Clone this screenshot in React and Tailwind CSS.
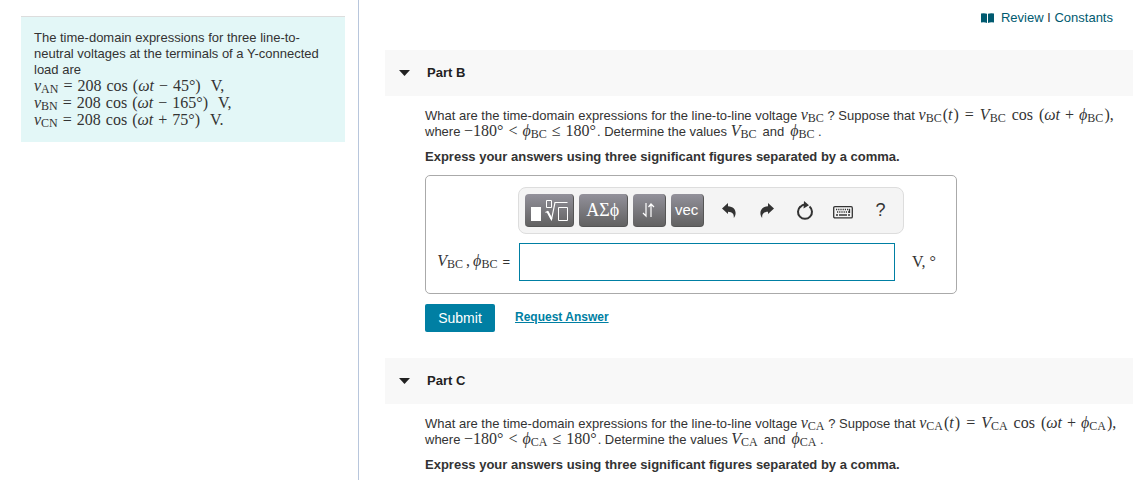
import React from "react";

const Sub = ({ children }) => (
  <span className="align-[-2px] text-[12px] leading-[0px] not-italic">{children}</span>
);

const Var = ({ name, sub }) => (
  <span>
    <i className="italic">{name}</i>
    {sub && <Sub>{sub}</Sub>}
  </span>
);

const M = ({ children }) => (
  <span className="font-['Liberation_Serif',serif] text-[16px] leading-[0px] whitespace-nowrap">
    {children}
  </span>
);

const Op = ({ children }) => <span className="mx-[5px]">{children}</span>;

function Voltage({ sub, sign, angle, end }) {
  return (
    <p className="h-[17px] leading-[17px]">
      <M>
        <Var name="v" sub={sub} />
        <Op>=</Op>208<span className="mx-[5px]">cos</span>(
        <Var name="ωt" />
        <Op>{sign}</Op>
        {angle}°)
        <span className="ml-2.5">V{end}</span>
      </M>
    </p>
  );
}

function PartHeader({ title }) {
  return (
    <h2 className="mr-1.5 bg-[#f8f8f8] text-[13px] font-bold text-[#222]">
      <button type="button" className="flex h-[46px] w-full items-center pl-3.5 text-left">
        <svg width="11" height="6" viewBox="0 0 11 6" className="mr-[17px]" aria-hidden="true">
          <path d="M0 0h11L5.5 6z" fill="#222" />
        </svg>
        {title}
      </button>
    </h2>
  );
}

function Question({ sub }) {
  return (
    <div className="pt-3 pr-1.5 pl-10 leading-4">
      <p>
        What are the time-domain expressions for the line-to-line voltage{" "}
        <M><Var name="v" sub={sub} /></M> ? Suppose that{" "}
        <M>
          <Var name="v" sub={sub} />
          <span className="ml-px">(</span>
          <Var name="t" />
          <span className="ml-px">)</span>
          <span className="mx-1.5">=</span>
          <Var name="V" sub={sub} />
          <span className="mx-1.5">cos</span>(
          <Var name="ωt" />
          <Op>+</Op>
          <Var name="ϕ" sub={sub} />
          <span className="ml-px">),</span>
        </M>{" "}
        where{" "}
        <M>
          −180°<Op>&lt;</Op>
          <Var name="ϕ" sub={sub} />
          <Op>≤</Op>180°
        </M>
        <span className="ml-px">. Determine the values </span>
        <M><Var name="V" sub={sub} /></M>
        <span className="mx-1.5">and</span>
        <M><Var name="ϕ" sub={sub} /></M> .
      </p>
      <p className="mt-[9px] font-bold">
        Express your answers using three significant figures separated by a comma.
      </p>
    </div>
  );
}

const darkButton =
  "flex h-[33px] items-center justify-center rounded border-r border-b border-[#555] bg-linear-to-b from-[#93919b] to-[#626262] text-white";
const iconButton = "flex h-[33px] w-[33px] items-center justify-center text-[#333]";

function Toolbar() {
  return (
    <div
      role="toolbar"
      className="flex h-[47px] w-[386px] items-center gap-[5px] rounded-lg border border-[#ddd] bg-[#f4f4f4] px-1.5"
    >
      <button type="button" aria-label="Templates" className={darkButton + " w-[49px] pb-1"}>
        <svg width="39" height="25" viewBox="0 0 39 25" fill="none" stroke="#fff">
          <path d="M2 11h10v14H2z" fill="#fff" stroke="none" />
          <path d="M17.500 4.500h5v7h-5z" />
          <path d="M16.500 16.500l2-1 4 8L26 6.500h12.500" strokeWidth="1.200" />
          <path d="M18.500 15.500l4 7.500" strokeWidth="2" />
          <path d="M29.500 11.500h9v13h-9z" />
        </svg>
      </button>
      <button
        type="button"
        aria-label="Symbols"
        className={darkButton + " w-[49px] font-['Liberation_Serif',serif] text-[18px]"}
      >
        ΑΣϕ
      </button>
      <button type="button" aria-label="Arrows" className={darkButton + " w-[33px]"}>
        <svg width="13" height="16" viewBox="0 0 13 16" fill="none" stroke="#fff">
          <path d="M4 1v13M1 11l3 3V11M9 15V2M6.500 5L9 2l3 3" strokeWidth="1.200" />
        </svg>
      </button>
      <button type="button" className={darkButton + " w-[33px] text-[15px]"}>
        vec
      </button>
      <button type="button" aria-label="Undo" className={iconButton + " ml-1"}>
        <svg width="14" height="15" viewBox="0 0 14 15" fill="currentColor">
          <path d="M0 5.500L6 0v3.200c5 .3 7.600 3 7.600 6.800 0 2-.7 3.700-1.800 5 .4-4-1.300-6.200-5.800-6.300V11z" />
        </svg>
      </button>
      <button type="button" aria-label="Redo" className={iconButton}>
        <svg width="14" height="15" viewBox="0 0 14 15" fill="currentColor">
          <path d="M14 5.500L8 0v3.200C3 3.500.4 6.200.4 10c0 2 .7 3.700 1.800 5-.4-4 1.300-6.200 5.800-6.300V11z" />
        </svg>
      </button>
      <button type="button" aria-label="Reset" className={iconButton}>
        <svg width="18" height="20" viewBox="0 0 18 20" fill="none">
          <path d="M4.500 5.500A7 7 0 1 0 13.500 5.500" stroke="currentColor" strokeWidth="2" />
          <path d="M4 6.200Q6.500 3.500 9 3.500" stroke="currentColor" strokeWidth="2" />
          <path d="M8 0l5 4.200-5.500 3.300z" fill="currentColor" />
        </svg>
      </button>
      <button type="button" aria-label="Keyboard" className={iconButton}>
        <svg width="20" height="13" viewBox="0 0 20 13" fill="none" stroke="currentColor" className="mt-1">
          <rect x=".7" y=".7" width="18.600" height="11.200" rx="1.200" strokeWidth="1.300" />
          <path d="M3 3.500h14M4 6h12.500" strokeWidth="1.300" strokeDasharray="1.200 1" />
          <path d="M3 9h2M6 9h8M15 9h2M16.500 3v4" strokeWidth="1.300" />
        </svg>
      </button>
      <button type="button" aria-label="Help" className={iconButton + " text-[18px]"}>
        ?
      </button>
    </div>
  );
}

function AnswerForm() {
  return (
    <form className="pl-10" onSubmit={(e) => e.preventDefault()}>
      <div className="mt-2.5 grid h-[119px] max-w-[532px] grid-cols-[84px_386px_1fr] content-start gap-x-2 rounded-[5px] border border-[#aaa] pt-[11px]">
        <div className="col-start-2">
          <Toolbar />
        </div>
        <label htmlFor="answer-b" className="col-start-1 mt-[9px] flex h-[38px] items-center justify-end">
          <span className="whitespace-nowrap">
            <M>
              <Var name="V" sub="BC" />
              <span className="mx-[3px]">,</span>
              <Var name="ϕ" sub="BC" />
            </M>
            <span className="ml-[5px]">=</span>
          </span>
        </label>
        <input
          id="answer-b"
          type="text"
          className="mt-[9px] ml-px h-[38px] w-[376px] border border-[#007fa3] bg-white px-2 outline-none"
        />
        <span className="mt-[9px] flex h-[38px] items-center">
          <M>V, °</M>
        </span>
      </div>
      <div className="mt-2.5 flex items-center gap-5">
        <button type="submit" className="h-7 w-[70px] rounded-[2px] bg-[#007fa3] text-[14px] font-medium text-white">
          Submit
        </button>
        <a href="#request" className="pb-0.5 text-[12px] font-bold text-[#007fa3] underline">
          Request Answer
        </a>
      </div>
    </form>
  );
}

export default function App() {
  return (
    <div className="flex h-screen overflow-hidden bg-white font-['Liberation_Sans',sans-serif] text-[13px] text-[#333]">
      <aside className="w-[359px] shrink-0 border-r border-[#b8c6dc] pt-4 pr-[13px] pl-[21px]">
        <div className="border-t border-[#ddd] bg-[#e3f7f7] pt-[13px] pr-3 pb-[13px] pl-[13px] leading-4">
          <p>The time-domain expressions for three line-to-neutral voltages at the terminals of a Y-connected load are</p>
          <Voltage sub="AN" sign="−" angle="45" end="," />
          <Voltage sub="BN" sign="−" angle="165" end="," />
          <Voltage sub="CN" sign="+" angle="75" end="." />
        </div>
      </aside>
      <main className="min-w-0 flex-1 pl-[26px]">
        <nav className="flex h-[50px] items-start justify-end pt-2.5 pr-[26px] leading-4 text-[#005a70]">
          <svg width="13" height="10" viewBox="0 0 13 10" className="mt-[3px] mr-[7px]" aria-hidden="true">
            <path d="M0 .5Q3.500-.3 6 .8V10Q3.500 8.800 0 9.500zM7 .8Q9.500-.3 13 .5v9Q9.500 8.800 7 10z" fill="#005a70" />
          </svg>
          <a href="#review">Review</a>
          <span className="mx-1 text-[#333]">l</span>
          <a href="#constants">Constants</a>
        </nav>
        <section>
          <PartHeader title="Part B" />
          <Question sub="BC" />
          <AnswerForm />
        </section>
        <section className="mt-[26px]">
          <PartHeader title="Part C" />
          <Question sub="CA" />
        </section>
      </main>
    </div>
  );
}
